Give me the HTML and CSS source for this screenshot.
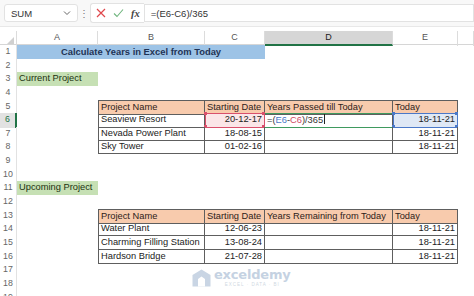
FILE: index.html
```html
<!DOCTYPE html>
<html lang="en">
<head>
    <meta charset="UTF-8">
    <meta name="viewport" content="width=device-width, initial-scale=1.0">
    <title>Calculate Years in Excel from Today</title>
    <link rel="stylesheet" href="styles.css">
</head>
<body>
    <div class="formula-bar">
        <div class="name-box">
            <span>SUM</span>
            <svg class="chevron" width="8" height="6" viewBox="0 0 8 6"><path d="M1 1.5 L4 4.5 L7 1.5" fill="none" stroke="#666" stroke-width="1"/></svg>
        </div>
        <div class="dots">⋮</div>
        <div class="fx-buttons">
            <svg width="10" height="10" viewBox="0 0 10 10"><path d="M1 1 L9 9 M9 1 L1 9" stroke="#e0474c" stroke-width="1.2"/></svg>
            <svg width="11" height="10" viewBox="0 0 11 10"><path d="M1 5.5 L4 8.5 L10 1.5" fill="none" stroke="#6fb57d" stroke-width="1.1"/></svg>
            <span class="fx">fx</span>
        </div>
        <div class="formula">=(E6-C6)/365</div>
    </div>

    <div class="sheet">
        <div class="row heads">
            <div class="corner"><svg width="7" height="7" viewBox="0 0 7 7"><path d="M7 0 L7 7 L0 7 Z" fill="#d0d0d0"/></svg></div>
            <div class="ch">A</div>
            <div class="ch">B</div>
            <div class="ch">C</div>
            <div class="ch active">D</div>
            <div class="ch">E</div>
            <div class="ch"></div>
        </div>

        <div class="row"><div class="rh">1</div><div class="title">Calculate Years in Excel from Today</div></div>
        <div class="row"><div class="rh">2</div></div>
        <div class="row"><div class="rh">3</div><div class="label">Current Project</div></div>
        <div class="row"><div class="rh">4</div></div>
        <div class="row"><div class="rh">5</div><div></div>
            <div class="cell head first top">Project Name</div>
            <div class="cell head top">Starting Date</div>
            <div class="cell head top">Years Passed till Today</div>
            <div class="cell head top">Today</div>
        </div>
        <div class="row"><div class="rh active">6</div><div></div>
            <div class="cell first">Seaview Resort</div>
            <div class="cell num ref-red">20-12-17<i class="knob tl"></i><i class="knob tr"></i><i class="knob bl"></i><i class="knob br"></i></div>
            <div class="cell editing">=(<span class="blue">E6</span>-<span class="red">C6</span>)/365<span class="caret"></span></div>
            <div class="cell num ref-blue">18-11-21<i class="knob tl"></i><i class="knob tr"></i><i class="knob bl"></i><i class="knob br"></i></div>
        </div>
        <div class="row"><div class="rh">7</div><div></div>
            <div class="cell first">Nevada Power Plant</div>
            <div class="cell num">18-08-15</div>
            <div class="cell"></div>
            <div class="cell num">18-11-21</div>
        </div>
        <div class="row"><div class="rh">8</div><div></div>
            <div class="cell first">Sky Tower</div>
            <div class="cell num">01-02-16</div>
            <div class="cell"></div>
            <div class="cell num">18-11-21</div>
        </div>
        <div class="row"><div class="rh">9</div></div>
        <div class="row"><div class="rh">10</div></div>
        <div class="row"><div class="rh">11</div><div class="label">Upcoming Project</div></div>
        <div class="row"><div class="rh">12</div></div>
        <div class="row"><div class="rh">13</div><div></div>
            <div class="cell head first top">Project Name</div>
            <div class="cell head top">Starting Date</div>
            <div class="cell head top">Years Remaining from Today</div>
            <div class="cell head top">Today</div>
        </div>
        <div class="row"><div class="rh">14</div><div></div>
            <div class="cell first">Water Plant</div>
            <div class="cell num">12-06-23</div>
            <div class="cell"></div>
            <div class="cell num">18-11-21</div>
        </div>
        <div class="row"><div class="rh">15</div><div></div>
            <div class="cell first">Charming Filling Station</div>
            <div class="cell num">13-08-24</div>
            <div class="cell"></div>
            <div class="cell num">18-11-21</div>
        </div>
        <div class="row"><div class="rh">16</div><div></div>
            <div class="cell first">Hardson Bridge</div>
            <div class="cell num">21-07-28</div>
            <div class="cell"></div>
            <div class="cell num">18-11-21</div>
        </div>
        <div class="row"><div class="rh">17</div></div>
        <div class="row"><div class="rh">18</div></div>
        <div class="row"><div class="rh">19</div></div>

        <div class="watermark">
            <svg width="19" height="18" viewBox="0 0 19 18"><path d="M9.5 0.5 L18.5 6 L18.5 17.5 L0.5 17.5 L0.5 6 Z" fill="#c9d5e4"/><path d="M6 10 L9.5 7.5 L13 10 L13 17.5 L6 17.5 Z" fill="#ffffff"/></svg>
            <div class="wm-text">
                <div class="wm-name">exceldemy</div>
                <div class="wm-sub">EXCEL · DATA · BI</div>
            </div>
        </div>
    </div>
</body>
</html>
```

FILE: styles.css
```css
body {
    margin: 0;
    width: 474px;
    height: 296px;
    overflow: hidden;
    background: #ffffff;
    font-family: "Liberation Sans", Arial, sans-serif;
    font-size: 9.3px;
    color: #222;
}

.formula-bar {
    display: flex;
    align-items: center;
    height: 22px;
    padding: 2px 0 2px 4px;
    background: #f8f8f8;
    border-bottom: 1px solid #e8e8e8;
    font-size: 9.5px;
}

.name-box {
    display: flex;
    align-items: center;
    justify-content: space-between;
    width: 74px;
    height: 18px;
    padding: 0 6px;
    box-sizing: border-box;
    background: #fff;
    border: 1px solid #e2e2e2;
    border-radius: 3px;
    color: #333;
}

.dots {
    width: 12px;
    text-align: center;
    color: #777;
    font-size: 10px;
}

.fx-buttons {
    display: flex;
    align-items: center;
    gap: 7px;
    height: 18px;
    padding: 0 4px 0 5px;
    background: #fff;
    border: 1px solid #e2e2e2;
    border-right: none;
    border-radius: 3px 0 0 3px;
}

.fx {
    font-family: "Liberation Serif", serif;
    font-style: italic;
    font-weight: bold;
    font-size: 10.5px;
    color: #444;
}

.formula {
    flex: 1;
    height: 18px;
    line-height: 18px;
    padding-left: 6px;
    box-sizing: border-box;
    background: #fff;
    border: 1px solid #e2e2e2;
    color: #333;
}

.sheet {
    position: relative;
    margin-top: 4px;
}

.row {
    display: grid;
    grid-template-columns: 17px 81px 107px 60px 128px 65px 1fr;
    height: 13.65px;
    line-height: 13px;
}

.heads {
    height: 13px;
    border-bottom: 1px solid #d6d6d6;
    color: #555;
    font-size: 9px;
}

.corner {
    display: flex;
    align-items: flex-end;
    justify-content: flex-end;
    padding: 0 2px 2px 0;
    border-right: 1px solid #dcdcdc;
}

.ch {
    text-align: center;
    border-right: 1px solid #dcdcdc;
}

.ch.active {
    background: #d6d6d6;
    border-bottom: 2px solid #217346;
    color: #222;
}

.rh {
    grid-column: 1;
    text-align: center;
    color: #666;
    font-size: 8.8px;
    border-right: 1px solid #e2e2e2;
}

.rh.active {
    background: #e2e2e2;
    border-right: 2px solid #217346;
    color: #217346;
}

.title {
    grid-column: 2 / 5;
    background: #9dc3e6;
    text-align: center;
    color: #1f3355;
    font-weight: bold;
    font-size: 9.4px;
}

.label {
    background: #c6e0b4;
    padding-left: 2px;
    color: #1c3210;
    white-space: nowrap;
}

.cell {
    position: relative;
    padding: 0 2px;
    border-right: 1px solid #5e5e5e;
    border-bottom: 1px solid #5e5e5e;
    white-space: nowrap;
    overflow: visible;
}

.cell.first {
    border-left: 1px solid #5e5e5e;
}

.cell.top {
    border-top: 1px solid #5e5e5e;
}

.cell.head {
    background: #f8cbad;
    color: #2e2119;
}

.cell.num {
    text-align: right;
}

.ref-red {
    background: #fbe6e8;
    outline: 1px solid #d9506c;
    outline-offset: -1px;
}

.ref-blue {
    background: #dfe8f5;
    outline: 1px solid #4a78c8;
    outline-offset: -1px;
}

.editing {
    border-top: 1px solid #3f9a5e;
    border-bottom: 1px solid #3f9a5e;
    color: #333;
}

.blue {
    color: #4a78c8;
}

.red {
    color: #cf4a64;
}

.caret {
    display: inline-block;
    width: 1px;
    height: 10px;
    margin-left: 1px;
    vertical-align: -1px;
    background: #222;
}

.knob {
    position: absolute;
    width: 3px;
    height: 3px;
}

.ref-red .knob {
    background: #d9506c;
}

.ref-blue .knob {
    background: #4a78c8;
}

.knob.tl { top: -1px; left: -1px; }
.knob.tr { top: -1px; right: -1px; }
.knob.bl { bottom: -1px; left: -1px; }
.knob.br { bottom: -1px; right: -1px; }

.watermark {
    position: absolute;
    left: 192px;
    top: 237px;
    display: flex;
    align-items: center;
    gap: 3px;
}

.wm-name {
    font-family: "DejaVu Sans", sans-serif;
    font-weight: bold;
    font-size: 13px;
    line-height: 14px;
    color: #c5d2e2;
    letter-spacing: -0.2px;
}

.wm-sub {
    font-size: 4.5px;
    letter-spacing: 1px;
    color: #d0d8e2;
    text-align: center;
}
```
